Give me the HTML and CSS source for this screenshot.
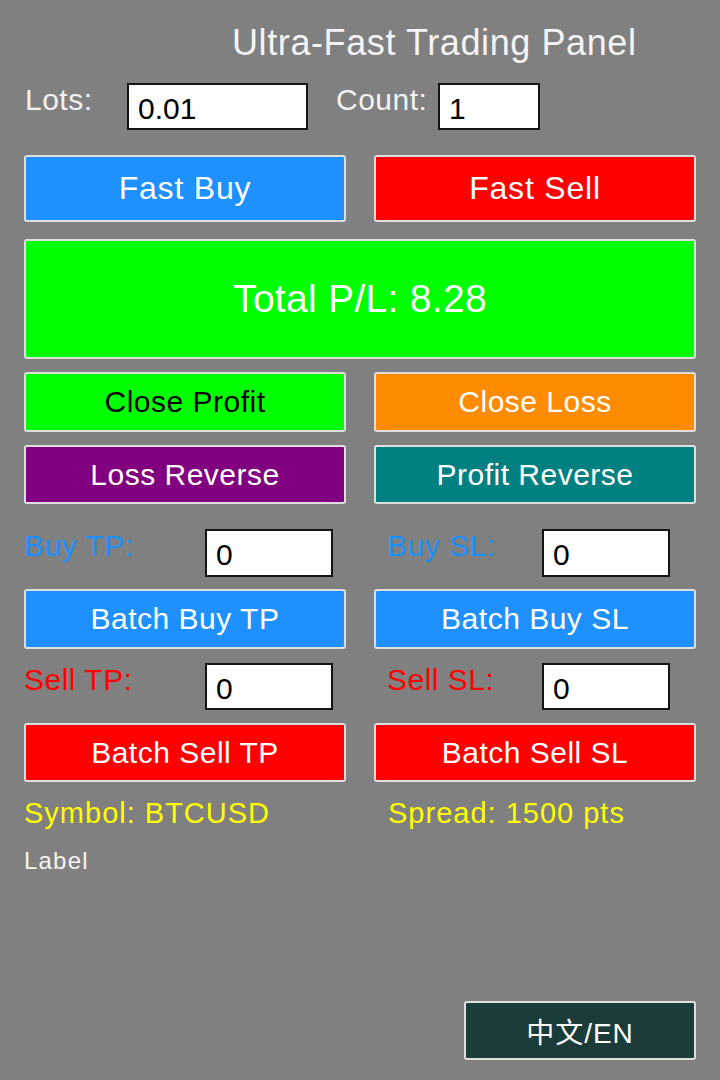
FILE: index.html
```html
<!DOCTYPE html>
<html lang="en">
<head>
<meta charset="utf-8">
<title>Ultra-Fast Trading Panel</title>
<link rel="stylesheet" href="styles.css">
</head>
<body>
<div class="panel">
  <div class="title">Ultra-Fast Trading Panel</div>

  <div class="lots-row">
    <span class="lbl lbl-lots">Lots:</span>
    <input class="field field-lots" type="text" value="0.01">
    <span class="lbl lbl-count">Count:</span>
    <input class="field field-count" type="text" value="1">
  </div>

  <div class="grid row-fast">
    <div class="btn btn-fast bg-blue">Fast Buy</div>
    <div class="btn btn-fast bg-red">Fast Sell</div>
  </div>

  <div class="pl">Total P/L: 8.28</div>

  <div class="grid row-close">
    <div class="btn bg-lime txt-black">Close Profit</div>
    <div class="btn bg-orange">Close Loss</div>
  </div>

  <div class="grid row-rev">
    <div class="btn bg-purple">Loss Reverse</div>
    <div class="btn bg-teal">Profit Reverse</div>
  </div>

  <div class="grid row-tp">
    <div class="cell">
      <span class="lbl lbl-tp c-blue">Buy TP:</span>
      <input class="field field-tp" type="text" value="0">
    </div>
    <div class="cell cell-right">
      <span class="lbl lbl-sl c-blue">Buy SL:</span>
      <input class="field field-tp" type="text" value="0">
    </div>
  </div>

  <div class="grid row-batch-buy">
    <div class="btn bg-blue">Batch Buy TP</div>
    <div class="btn bg-blue">Batch Buy SL</div>
  </div>

  <div class="grid row-tp row-sell-tp">
    <div class="cell">
      <span class="lbl lbl-tp c-red">Sell TP:</span>
      <input class="field field-tp" type="text" value="0">
    </div>
    <div class="cell cell-right">
      <span class="lbl lbl-sl c-red">Sell SL:</span>
      <input class="field field-tp" type="text" value="0">
    </div>
  </div>

  <div class="grid row-batch-sell">
    <div class="btn bg-red">Batch Sell TP</div>
    <div class="btn bg-red">Batch Sell SL</div>
  </div>

  <div class="grid row-info">
    <div class="info">Symbol: BTCUSD</div>
    <div class="info info-right">Spread: 1500 pts</div>
  </div>

  <div class="small-label">Label</div>

  <div class="lang-row">
    <div class="btn lang">中文/EN</div>
  </div>
</div>
</body>
</html>
```

FILE: styles.css
```css
html, body {
  margin: 0;
  padding: 0;
  background: #808080;
}

body {
  font-family: "Liberation Sans", Arial, "Noto Sans CJK SC", sans-serif;
  color: #f2f2f2;
  width: 720px;
  height: 1080px;
  overflow: hidden;
}

.panel {
  padding: 0 24px;
  width: 672px;
}

.title {
  margin-top: 23px;
  height: 40px;
  line-height: 40px;
  font-size: 36px;
  letter-spacing: 0.6px;
  padding-left: 208px;
  color: #f4f4f4;
  white-space: nowrap;
}

.lbl {
  display: block;
  font-size: 30px;
  line-height: 30px;
  letter-spacing: 0.5px;
  margin-top: 2px;
  white-space: nowrap;
}

.field {
  display: block;
  box-sizing: border-box;
  height: 47px;
  margin: 0;
  border: 2px solid #141414;
  background: #ffffff;
  color: #000000;
  font-family: "Liberation Sans", Arial, sans-serif;
  font-size: 30px;
  padding: 4px 0 0 9px;
  outline: none;
  border-radius: 0;
}

.lots-row {
  display: flex;
  align-items: flex-start;
  margin-top: 20px;
  height: 47px;
}

.lbl-lots { width: 103px; padding-left: 1px; box-sizing: border-box; }
.field-lots { width: 181px; }
.lbl-count { width: 102px; margin-left: 28px; }
.field-count { width: 102px; }

.grid {
  display: grid;
  grid-template-columns: 322px 322px;
  column-gap: 28px;
}

.btn {
  box-sizing: border-box;
  display: flex;
  align-items: center;
  justify-content: center;
  border: 2px solid #dedede;
  border-radius: 3px;
  color: #ffffff;
  font-size: 30px;
  letter-spacing: 0.5px;
  white-space: nowrap;
}

.btn-fast {
  font-size: 32px;
  letter-spacing: 0.8px;
}

.bg-blue { background: #1e90ff; }
.bg-red { background: #ff0000; }
.bg-lime { background: #00ff00; }
.bg-orange { background: #ff8c00; }
.bg-purple { background: #800080; }
.bg-teal { background: #008080; }
.txt-black { color: #000000; }

.c-blue { color: #1e90ff; }
.c-red { color: #ff0000; }

.row-fast { margin-top: 25px; height: 67px; }

.pl {
  box-sizing: border-box;
  margin-top: 17px;
  height: 120px;
  display: flex;
  align-items: center;
  justify-content: center;
  background: #00ff00;
  border: 2px solid #dedede;
  border-radius: 3px;
  color: #ffffff;
  font-size: 39px;
  letter-spacing: 0.3px;
}

.row-close { margin-top: 13px; height: 60px; }
.row-rev { margin-top: 13px; height: 59px; }

.row-tp { margin-top: 25px; height: 48px; }
.row-sell-tp { margin-top: 14px; height: 47px; }

.cell {
  display: flex;
  align-items: flex-start;
}

.cell-right { padding-left: 13px; }

.lbl-tp { width: 181px; }
.lbl-sl { width: 155px; }
.field-tp { width: 128px; height: 100%; }

.row-batch-buy { margin-top: 12px; height: 60px; }
.row-batch-sell { margin-top: 13px; height: 59px; }

.row-info { margin-top: 16px; height: 30px; }

.info {
  font-size: 29px;
  line-height: 30px;
  letter-spacing: 1px;
  color: #ffff00;
  white-space: nowrap;
}

.info-right { padding-left: 14px; }

.small-label {
  margin-top: 21px;
  height: 24px;
  font-size: 24px;
  line-height: 24px;
  letter-spacing: 1.2px;
  color: #f4f4f4;
}

.lang-row {
  display: flex;
  justify-content: flex-end;
  margin-top: 128px;
}

.lang {
  width: 232px;
  height: 59px;
  background: #1c3c3a;
  font-size: 28px;
  letter-spacing: 1px;
}
```
